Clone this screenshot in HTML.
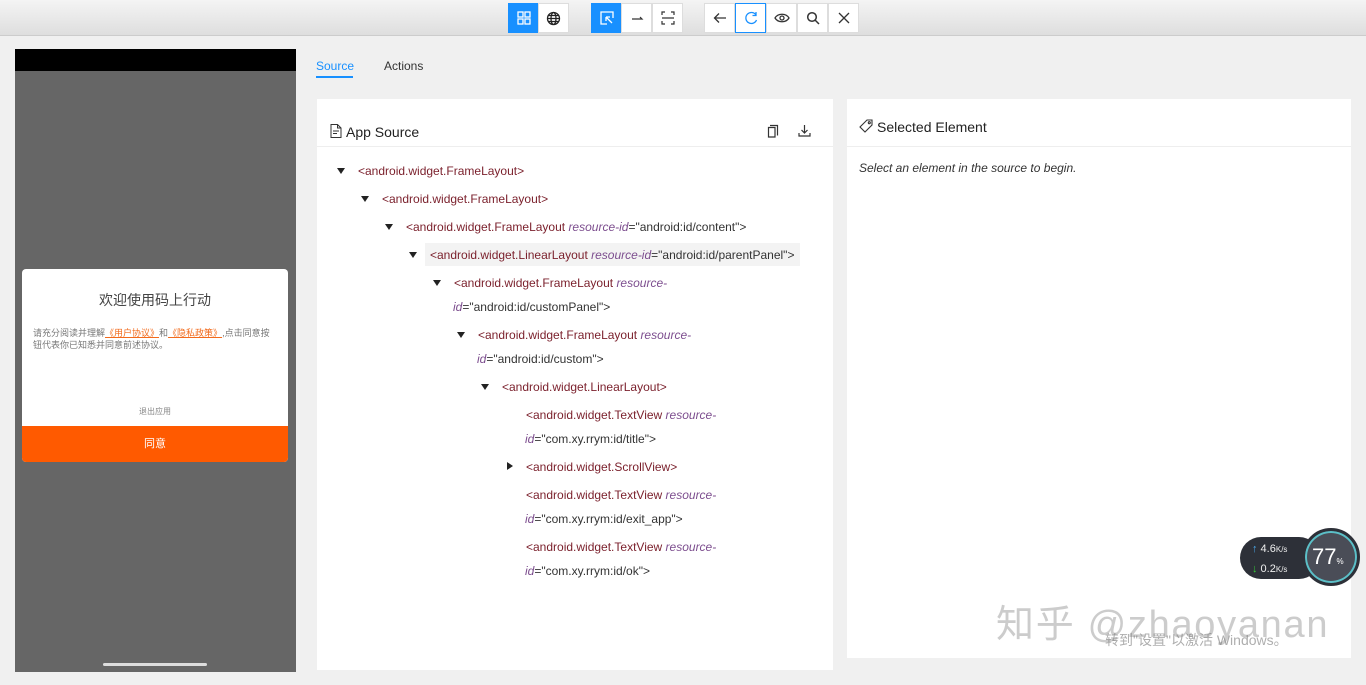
<!DOCTYPE html>
<html><head><meta charset="utf-8"><style>
*{margin:0;padding:0;box-sizing:border-box}
body{width:1366px;height:685px;background:#f0f0f0;font-family:"Liberation Sans","Noto Sans CJK SC",sans-serif;position:relative;overflow:hidden}
.a{position:absolute}
.top{left:0;top:0;width:1366px;height:36px;background:linear-gradient(#f4f4f4,#dedede);border-bottom:1px solid #ccc}
.btn{position:absolute;top:3px;width:31px;height:30px;background:#fff;border:1px solid #ddd;display:flex;align-items:center;justify-content:center;color:#333;font-size:14px}
.on{background:#1890ff;border-color:#1890ff;color:#fff}
.t{position:absolute;font-size:12px;color:#333;white-space:nowrap;line-height:14px}
.t b{font-weight:normal;color:#7a1f2b}
.t i{color:#7c4d8e}
.arr{position:absolute;width:0;height:0;border-left:4px solid transparent;border-right:4px solid transparent;border-top:6px solid #222}
.arr.r{border-top:4px solid transparent;border-bottom:4px solid transparent;border-left:6px solid #222;border-right:0}
</style></head><body>
<div class="a top"></div>
<div class="btn on" style="left:508px"><svg width="14" height="14" fill="none" stroke="#fff" stroke-width="1.3"><rect x="1" y="1" width="5" height="5"/><rect x="8" y="1" width="5" height="5"/><rect x="1" y="8" width="5" height="5"/><rect x="8" y="8" width="5" height="5"/></svg></div>
<div class="btn" style="left:538px"><svg width="15" height="15" fill="none" stroke="#222" stroke-width="1.3"><circle cx="7.5" cy="7.5" r="6"/><ellipse cx="7.5" cy="7.5" rx="2.5" ry="6"/><path d="M1.5 7.5h12M2.5 4.5h10M2.5 10.5h10"/></svg></div>
<div class="btn on" style="left:591px"><svg width="14" height="14" fill="none" stroke="#fff" stroke-width="1.3"><path d="M7 1H1v12h6M13 7V1H7"/><path d="M6 6l6 6M6 6h4M6 6v4"/></svg></div>
<div class="btn" style="left:621px"><svg width="14" height="14" fill="none" stroke="#333" stroke-width="1.2"><path d="M2 8h10l-2-2"/></svg></div>
<div class="btn" style="left:652px"><svg width="14" height="14" fill="none" stroke="#333" stroke-width="1.2"><path d="M1 4V1h3M10 1h3v3M13 10v3h-3M4 13H1v-3M1 7h12"/></svg></div>
<div class="btn" style="left:704px"><svg width="14" height="14" fill="none" stroke="#333" stroke-width="1.3"><path d="M13 7H2M6 2.5L1.5 7 6 11.5"/></svg></div>
<div class="btn" style="left:735px;border-color:#1890ff"><svg width="14" height="14" fill="none" stroke="#1890ff" stroke-width="1.3"><path d="M12 4A5.5 5.5 0 1 0 12.5 9"/><path d="M12 1v3.5H8.5"/></svg></div>
<div class="btn" style="left:766px"><svg width="16" height="14" fill="none" stroke="#333" stroke-width="1.3"><path d="M1 7c3-5 11-5 14 0-3 5-11 5-14 0z"/><circle cx="8" cy="7" r="2"/></svg></div>
<div class="btn" style="left:797px"><svg width="14" height="14" fill="none" stroke="#333" stroke-width="1.5"><circle cx="6" cy="6" r="4.3"/><path d="M9 9l4 4"/></svg></div>
<div class="btn" style="left:828px"><svg width="12" height="12" fill="none" stroke="#333" stroke-width="1.3"><path d="M1 1l10 10M11 1L1 11"/></svg></div>

<div class="a" style="left:15px;top:49px;width:281px;height:623px;background:#666"></div>
<div class="a" style="left:15px;top:49px;width:281px;height:22px;background:#000"></div>
<div class="a" style="left:103px;top:663px;width:104px;height:3px;background:#ddd;border-radius:2px"></div>
<div class="a" style="left:22px;top:269px;width:266px;height:193px;background:#fff;border-radius:4px;overflow:hidden">
<div class="a" style="left:0;top:21px;width:266px;text-align:center;font-size:14px;color:#444">欢迎使用码上行动</div>
<div class="a" style="left:11px;top:58px;width:240px;font-size:9px;line-height:12px;color:#777">请充分阅读并理解<span style="color:#f26a1b;text-decoration:underline">《用户协议》</span>和<span style="color:#f26a1b;text-decoration:underline">《隐私政策》</span>,点击同意按钮代表你已知悉并同意前述协议。</div>
<div class="a" style="left:0;top:137px;width:266px;text-align:center;font-size:8px;color:#888">退出应用</div>
<div class="a" style="left:0;top:157px;width:266px;height:36px;background:#ff5a00;color:#fff;font-size:11px;text-align:center;line-height:36px">同意</div>
</div>

<div class="t" style="left:316px;top:59px;color:#1890ff">Source</div>
<div class="a" style="left:316px;top:76px;width:37px;height:2px;background:#1890ff"></div>
<div class="t" style="left:384px;top:59px">Actions</div>

<div class="a" style="left:317px;top:99px;width:516px;height:571px;background:#fff"></div>
<div class="a" style="left:317px;top:146px;width:516px;height:1px;background:#eee"></div>
<svg class="a" style="left:330px;top:124px" width="12" height="14" fill="none" stroke="#333" stroke-width="1"><path d="M1 .5h6.5l3.5 3.5v9.5H1z M7.5 .5V4H11 M3 7h6M3 9.5h4"/></svg>
<div class="t" style="left:346px;top:124px;font-size:14px;line-height:16px;color:#222">App Source</div>
<svg class="a" style="left:767px;top:124px" width="12" height="14" fill="none" stroke="#333" stroke-width="1.2"><path d="M3 1.5h7.5v10M1.5 3.5h6.5v9.5H1.5z"/></svg>
<svg class="a" style="left:798px;top:124px" width="13" height="13" fill="none" stroke="#333" stroke-width="1.2"><path d="M6.5 1v8M3.5 6l3 3 3-3M1 9v3h11V9"/></svg>

<div class="a" style="left:425px;top:243px;width:375px;height:23px;background:#f3f3f3"></div>
<div class="arr" style="left:337px;top:168px"></div><div class="t" style="left:358px;top:164px"><b>&lt;android.widget.FrameLayout&gt;</b></div>
<div class="arr" style="left:361px;top:196px"></div><div class="t" style="left:382px;top:192px"><b>&lt;android.widget.FrameLayout&gt;</b></div>
<div class="arr" style="left:385px;top:224px"></div><div class="t" style="left:406px;top:220px"><b>&lt;android.widget.FrameLayout</b> <i>resource-id</i>="android:id/content"&gt;</div>
<div class="arr" style="left:409px;top:252px"></div><div class="t" style="left:430px;top:248px"><b>&lt;android.widget.LinearLayout</b> <i>resource-id</i>="android:id/parentPanel"&gt;</div>
<div class="arr" style="left:433px;top:280px"></div><div class="t" style="left:454px;top:276px"><b>&lt;android.widget.FrameLayout</b> <i>resource-</i></div>
<div class="t" style="left:453px;top:300px"><i>id</i>="android:id/customPanel"&gt;</div>
<div class="arr" style="left:457px;top:332px"></div><div class="t" style="left:478px;top:328px"><b>&lt;android.widget.FrameLayout</b> <i>resource-</i></div>
<div class="t" style="left:477px;top:352px"><i>id</i>="android:id/custom"&gt;</div>
<div class="arr" style="left:481px;top:384px"></div><div class="t" style="left:502px;top:380px"><b>&lt;android.widget.LinearLayout&gt;</b></div>
<div class="t" style="left:526px;top:408px"><b>&lt;android.widget.TextView</b> <i>resource-</i></div>
<div class="t" style="left:525px;top:432px"><i>id</i>="com.xy.rrym:id/title"&gt;</div>
<div class="arr r" style="left:507px;top:462px"></div><div class="t" style="left:526px;top:460px"><b>&lt;android.widget.ScrollView&gt;</b></div>
<div class="t" style="left:526px;top:488px"><b>&lt;android.widget.TextView</b> <i>resource-</i></div>
<div class="t" style="left:525px;top:512px"><i>id</i>="com.xy.rrym:id/exit_app"&gt;</div>
<div class="t" style="left:526px;top:540px"><b>&lt;android.widget.TextView</b> <i>resource-</i></div>
<div class="t" style="left:525px;top:564px"><i>id</i>="com.xy.rrym:id/ok"&gt;</div>

<div class="a" style="left:847px;top:99px;width:504px;height:559px;background:#fff"></div>
<div class="a" style="left:847px;top:146px;width:504px;height:1px;background:#eee"></div>
<svg class="a" style="left:859px;top:119px" width="14" height="14" fill="none" stroke="#333" stroke-width="1.1"><path d="M8 1h5v5l-7 7-5-5z"/><circle cx="10.3" cy="3.7" r="1"/></svg>
<div class="t" style="left:877px;top:119px;font-size:14px;line-height:16px;color:#222">Selected Element</div>
<div class="t" style="left:859px;top:161px;font-style:italic;color:#333">Select an element in the source to begin.</div>

<div class="a" style="left:1240px;top:537px;width:80px;height:42px;background:#2d3038;border-radius:21px"></div>
<div class="t" style="left:1252px;top:542px;color:#eee;font-size:11px"><span style="color:#4aa8e8">↑</span> 4.6<span style="font-size:8px">K/s</span></div>
<div class="t" style="left:1252px;top:562px;color:#eee;font-size:11px"><span style="color:#3c3">↓</span> 0.2<span style="font-size:8px">K/s</span></div>
<div class="a" style="left:1302px;top:528px;width:58px;height:58px;border-radius:50%;background:#4a4d57;border:3px solid #2d3038;box-shadow:inset 0 0 0 2px #5bc0c8"></div>
<div class="t" style="left:1312px;top:545px;color:#fff;font-size:22px;line-height:24px">77<span style="font-size:8px">%</span></div>
<div class="t" style="left:996px;top:604px;font-size:38px;line-height:42px;letter-spacing:1.7px;color:rgba(170,170,170,.6)">知乎 @zhaoyanan</div>
<div class="t" style="left:1105px;top:633px;font-size:14px;color:rgba(120,120,120,.6)">转到"设置"以激活 Windows。</div>
</body></html>
